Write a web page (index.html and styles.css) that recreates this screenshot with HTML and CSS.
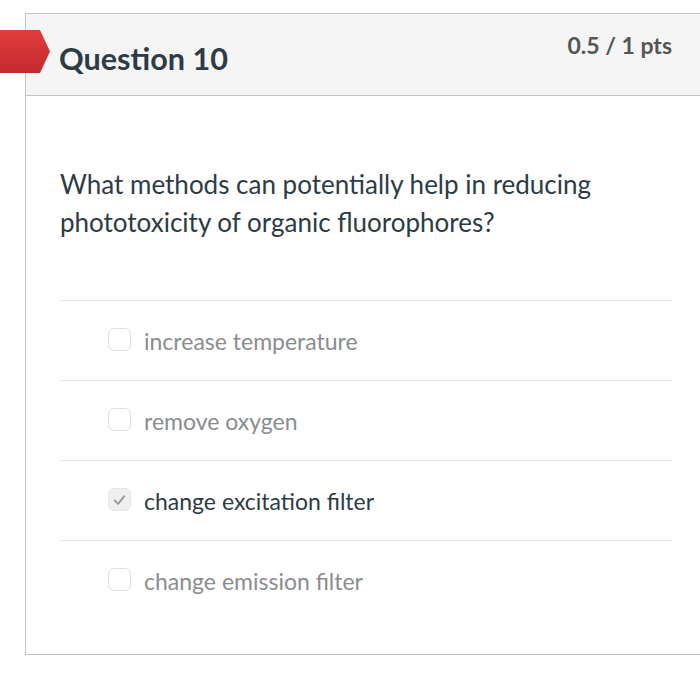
FILE: index.html
```html
<!DOCTYPE html>
<html>
<head>
<meta charset="utf-8">
<link rel="stylesheet" href="styles.css">
</head>
<body>
<div class="flag"></div>
<div class="card">
  <div class="card-header">
    <h2 class="q-title">Question 10</h2>
    <div class="q-pts">0.5 / 1 pts</div>
  </div>
  <div class="card-body">
    <p class="q-text">What methods can potentially help in reducing phototoxicity of organic fluorophores?</p>
    <ul class="answers">
      <li class="answer"><span class="box"></span><span class="label">increase temperature</span></li>
      <li class="answer"><span class="box"></span><span class="label">remove oxygen</span></li>
      <li class="answer selected"><span class="box checked"><svg viewBox="0 0 22 22" width="22" height="22"><path d="M6 11.5 L9.5 15 L16 7" fill="none" stroke="#9a9a9a" stroke-width="2" stroke-linecap="round" stroke-linejoin="round"/></svg></span><span class="label">change excitation filter</span></li>
      <li class="answer"><span class="box"></span><span class="label">change emission filter</span></li>
    </ul>
  </div>
</div>
</body>
</html>
```
FILE: styles.css
```css
html, body {
  margin: 0;
  padding: 0;
  overflow: hidden;
  background: #fff;
  font-family: Lato, "Open Sans", sans-serif;
}
body {
  position: relative;
  width: 700px;
  height: 673px;
  padding-top: 13px;
  box-sizing: border-box;
}
.flag {
  position: absolute;
  left: 0;
  top: 30px;
  width: 50px;
  height: 43px;
  background: linear-gradient(#e23d3d, #c42a2e);
  clip-path: polygon(0 0, 40px 0, 50px 21.5px, 40px 43px, 0 43px);
  z-index: 2;
}
.card {
  margin-left: 25px;
  width: 681px;
  border: 1px solid #c4c4c4;
  border-right: none;
  box-sizing: border-box;
}
.card-header {
  height: 81px;
  background: #f5f5f5;
  border-bottom: 1px solid #c4c4c4;
  display: flex;
  justify-content: space-between;
  align-items: flex-start;
  padding: 0 34px;
  box-sizing: content-box;
}
.q-title {
  margin: 26px 0 0 -1px;
  font-size: 30.6px;
  font-weight: 700;
  color: #2d3b45;
  line-height: 38px;
}
.q-pts {
  margin-top: 17px;
  font-size: 23px;
  font-weight: 700;
  color: #555;
  line-height: 28px;
}
.card-body {
  padding: 69px 34px 34px;
}
.q-text {
  margin: 0 0 59px;
  font-size: 26px;
  line-height: 38px;
  color: #2d3b45;
}
.answers {
  list-style: none;
  margin: 0;
  padding: 0;
}
.answer {
  height: 79px;
  border-top: 1px solid #e6e8ea;
  display: flex;
  align-items: center;
  padding-left: 48px;
  gap: 13px;
}
.box {
  width: 23px;
  height: 23px;
  border: 1.5px solid #e0e0e0;
  border-radius: 6px;
  box-sizing: border-box;
  display: flex;
  align-items: center;
  justify-content: center;
  flex: none;
  margin-top: -2px;
}
.box.checked {
  background: #efefef;
  border-color: #e6e6e6;
}
.box svg {
  width: 22px;
  height: 22px;
}
.label {
  font-size: 23px;
  color: #8a8d90;
}
.selected .label {
  color: #2d3b45;
}
```
